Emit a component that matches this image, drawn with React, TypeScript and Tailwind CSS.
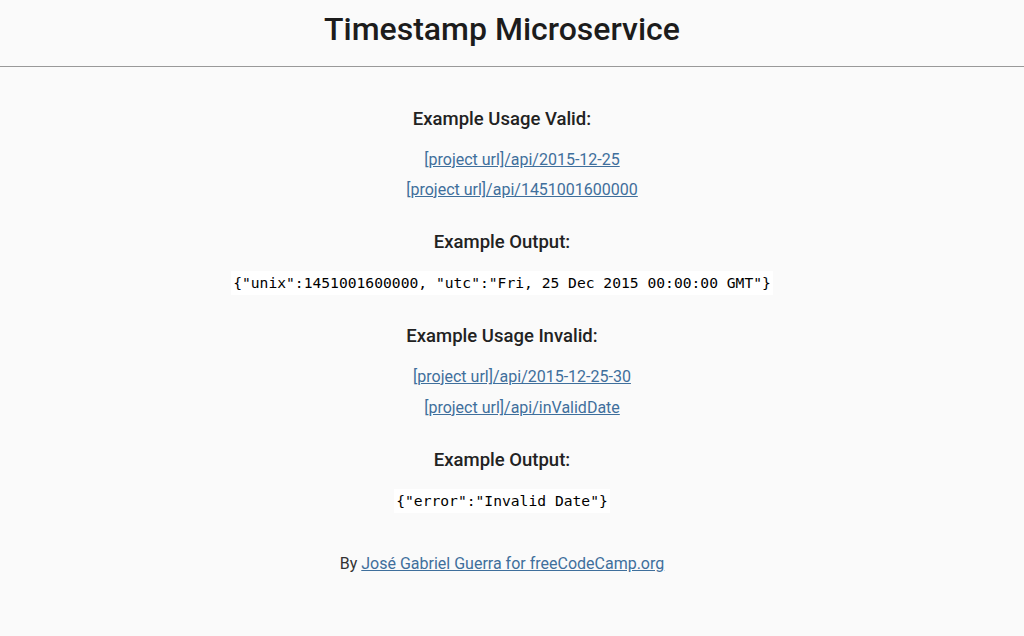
import React from "react";

const linkCls = "block leading-[30px] text-[16px] text-[#3f6f9c] underline";
const h3Cls = "leading-[24px] text-[18.5px] font-medium text-[#222]";
const codeCls = "inline-block bg-white leading-[24px] text-[14.65px] text-black px-[2px]";

export default function App() {
  return (
    <div
      className="min-h-[636px] bg-[#fafafa] text-[#222] text-center"
      style={{ fontFamily: "Roboto, 'Noto Sans', sans-serif" }}
    >
      <header className="pt-[12px] pb-[20px] border-b border-[#999]">
        <h1 className="pr-[20px] text-[32px] leading-[34px] font-medium text-[#1c1c1c]">Timestamp Microservice</h1>
      </header>
      <main className="flex flex-col items-center pr-[20px]">
        <h3 className={`${h3Cls} mt-[40px]`}>Example Usage Valid:</h3>
        <div className="mt-[14px] pl-[40px]">
          <a href="#" className={linkCls}>[project url]/api/2015-12-25</a>
          <a href="#" className={linkCls}>[project url]/api/1451001600000</a>
        </div>
        <h3 className={`${h3Cls} mt-[25px]`}>Example Output:</h3>
        <code className={`${codeCls} mt-[17px]`} style={{ fontFamily: "'DejaVu Sans Mono', monospace" }}>
          {'{"unix":1451001600000, "utc":"Fri, 25 Dec 2015 00:00:00 GMT"}'}
        </code>
        <h3 className={`${h3Cls} mt-[29px]`}>Example Usage Invalid:</h3>
        <div className="mt-[14px] pl-[40px]">
          <a href="#" className={linkCls}>[project url]/api/2015-12-25-30</a>
          <a href="#" className={`${linkCls} mt-[1px]`}>[project url]/api/inValidDate</a>
        </div>
        <h3 className={`${h3Cls} mt-[25px]`}>Example Output:</h3>
        <code className={`${codeCls} mt-[17px]`} style={{ fontFamily: "'DejaVu Sans Mono', monospace" }}>
          {'{"error":"Invalid Date"}'}
        </code>
        <p className="mt-[39px] leading-[24px] text-[16px] text-[#333]">
          By{" "}
          <a href="#" className="text-[#3f6f9c] underline">José Gabriel Guerra for freeCodeCamp.org</a>
        </p>
      </main>
    </div>
  );
}
